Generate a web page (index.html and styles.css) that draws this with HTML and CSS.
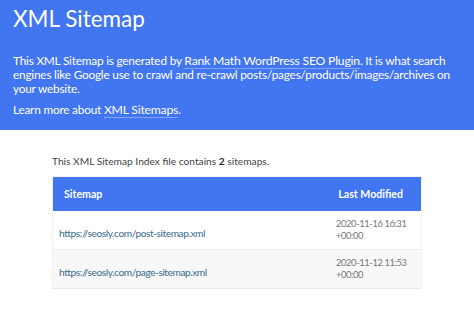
FILE: index.html
```html
<!DOCTYPE html>
<html lang="en">
<head>
    <meta charset="UTF-8">
    <title>XML Sitemap</title>
    <link rel="stylesheet" href="styles.css">
</head>
<body>
    <div class="header">
        <h1>XML Sitemap</h1>
        <p>This XML Sitemap is generated by <a href="#">Rank Math WordPress SEO Plugin</a>. It is what search engines like Google use to crawl and re-crawl posts/pages/products/images/archives on your website.</p>
        <p>Learn more about <a href="#">XML Sitemaps</a>.</p>
    </div>

    <div class="content">
        <p class="count">This XML Sitemap Index file contains <strong>2</strong> sitemaps.</p>

        <table class="sitemaps">
            <thead>
                <tr>
                    <th class="loc">Sitemap</th>
                    <th class="mod">Last Modified</th>
                </tr>
            </thead>
            <tbody>
                <tr>
                    <td class="loc"><a href="#">https://seosly.com/post-sitemap.xml</a></td>
                    <td class="mod"><span class="date">2020-11-16 16:31</span> +00:00</td>
                </tr>
                <tr>
                    <td class="loc"><a href="#">https://seosly.com/page-sitemap.xml</a></td>
                    <td class="mod"><span class="date">2020-11-12 11:53</span> +00:00</td>
                </tr>
            </tbody>
        </table>
    </div>
</body>
</html>
```

FILE: styles.css
```css
body {
    margin: 0;
    font-family: Lato, 'Open Sans', sans-serif;
    color: #444;
    background: #fff;
}
.header {
    background: #4275f0;
    color: #fff;
    padding: 4px 13px 13px;
}
h1 {
    font-size: 22.5px;
    font-weight: 400;
    margin: 0 0 20px;
    line-height: 30px;
}
.header p {
    font-size: 11.8px;
    letter-spacing: -0.2px;
    line-height: 14px;
    margin: 0 0 7px;
}
.header p:last-child {
    margin-bottom: 0;
}
.header a {
    color: #fff;
    text-decoration: none;
    border-bottom: 1px solid rgba(255, 255, 255, 0.35);
    font-size: 12.2px;
}
.content {
    width: 370px;
    margin: 0 auto;
    padding-top: 25px;
}
.count {
    font-size: 10.2px;
    margin: 0 0 9px;
}
.count strong {
    color: #222;
}
.sitemaps {
    width: 100%;
    border-collapse: collapse;
    border: 1px solid #f2f2f2;
}
.sitemaps th {
    background: #4275f0;
    color: #fff;
    font-size: 10.6px;
    font-weight: 700;
    height: 34px;
    padding: 0 11px;
    text-align: left;
    white-space: nowrap;
}
.sitemaps th.mod {
    text-align: right;
    padding: 0 18px 0 0;
}
.sitemaps td {
    height: 38px;
    padding: 0 6px;
    border-bottom: 1px solid #ececec;
}
.sitemaps td.mod {
    width: 75px;
    padding-right: 10px;
    color: #777;
    font-size: 9.4px;
    letter-spacing: -0.4px;
    line-height: 12px;
}
.sitemaps .date {
    white-space: nowrap;
}
.sitemaps tbody tr:nth-child(2) td {
    background: #f8f8f8;
}
.sitemaps a {
    color: #3a6d8e;
    text-decoration: none;
    font-size: 10.2px;
    letter-spacing: -0.45px;
}
```
